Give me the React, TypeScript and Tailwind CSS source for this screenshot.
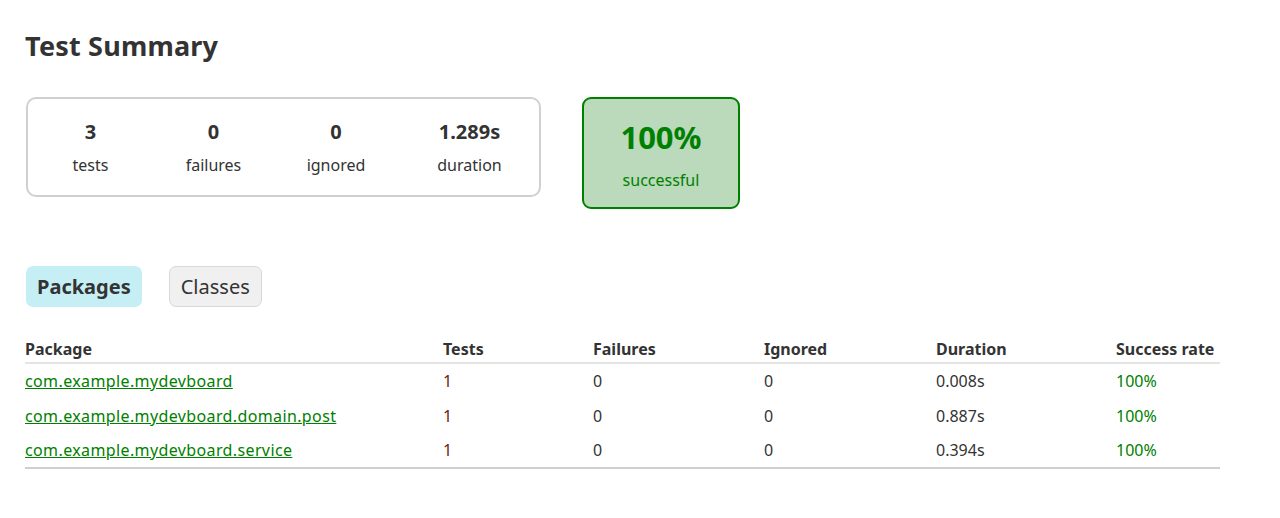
const rows = [
  { name: "com.example.mydevboard", tests: 1, failures: 0, ignored: 0, duration: "0.008s", rate: "100%" },
  { name: "com.example.mydevboard.domain.post", tests: 1, failures: 0, ignored: 0, duration: "0.887s", rate: "100%" },
  { name: "com.example.mydevboard.service", tests: 1, failures: 0, ignored: 0, duration: "0.394s", rate: "100%" },
];

function Counter({ value, label }: { value: string; label: string }) {
  return (
    <div className="flex flex-col items-center">
      <div className="text-[20px] font-bold leading-[26px]">{value}</div>
      <div className="text-[16px] leading-[22px] mt-[9px]">{label}</div>
    </div>
  );
}

export default function App() {
  return (
    <div
      className="min-h-screen bg-white text-[#333] px-[25px] pt-[26px]"
      style={{ fontFamily: '"Noto Sans", "Open Sans", sans-serif' }}
    >
      <h1 className="text-[27px] font-bold leading-[40px] tracking-[0.2px]">Test Summary</h1>

      {/* Summary */}
      <div className="flex items-start mt-[31px]">
        <div className="w-[515px] h-[100px] ml-px border-2 border-[#d0d0d0] rounded-[10px] grid grid-cols-[125px_121px_124px_143px] items-center">
          <Counter value="3" label="tests" />
          <Counter value="0" label="failures" />
          <Counter value="0" label="ignored" />
          <Counter value="1.289s" label="duration" />
        </div>
        <div className="ml-[41px] w-[158px] h-[112px] bg-[#bbd9bb] border-2 border-[#008000] rounded-[9px] flex flex-col items-center justify-center text-[#008000]">
          <div className="text-[31px] font-bold leading-[38px] mt-[2px]">100%</div>
          <div className="text-[16px] leading-[22px] mt-[13px]">successful</div>
        </div>
      </div>

      {/* Tabs */}
      <div className="flex items-center gap-[27px] mt-[57px] ml-px">
        <div className="h-[41px] px-[11px] rounded-[7px] bg-[#c5eff5] flex items-center text-[20px] font-bold">
          Packages
        </div>
        <div className="h-[41px] px-[11px] rounded-[7px] bg-[#f0f0f0] border border-[#d8d8d8] flex items-center text-[20px]">
          Classes
        </div>
      </div>

      {/* Table */}
      <table className="mt-[31px] w-[1195px] text-[16px] border-collapse">
        <thead>
          <tr className="border-b-2 border-[#e4e4e4] text-left">
            <th className="font-bold w-[418px] p-0 leading-[22px] pb-[2px]">Package</th>
            <th className="font-bold w-[150px] p-0 leading-[22px] pb-[2px]">Tests</th>
            <th className="font-bold w-[171px] p-0 leading-[22px] pb-[2px]">Failures</th>
            <th className="font-bold w-[172px] p-0 leading-[22px] pb-[2px]">Ignored</th>
            <th className="font-bold w-[180px] p-0 leading-[22px] pb-[2px]">Duration</th>
            <th className="font-bold p-0 leading-[22px] pb-[2px]">Success rate</th>
          </tr>
        </thead>
        <tbody>
          {rows.map((r, i) => (
            <tr
              key={r.name}
              className={i === rows.length - 1 ? "border-b-2 border-[#cfcfcf]" : ""}
            >
              <td className="p-0 h-[35px] align-middle">
                <a href="#" className="text-[#008000] underline tracking-[0.38px]">
                  {r.name}
                </a>
              </td>
              <td className="p-0 text-[#6b2424]">{r.tests}</td>
              <td className="p-0">{r.failures}</td>
              <td className="p-0">{r.ignored}</td>
              <td className="p-0">{r.duration}</td>
              <td className="p-0 text-[#008000]">{r.rate}</td>
            </tr>
          ))}
        </tbody>
      </table>
    </div>
  );
}
